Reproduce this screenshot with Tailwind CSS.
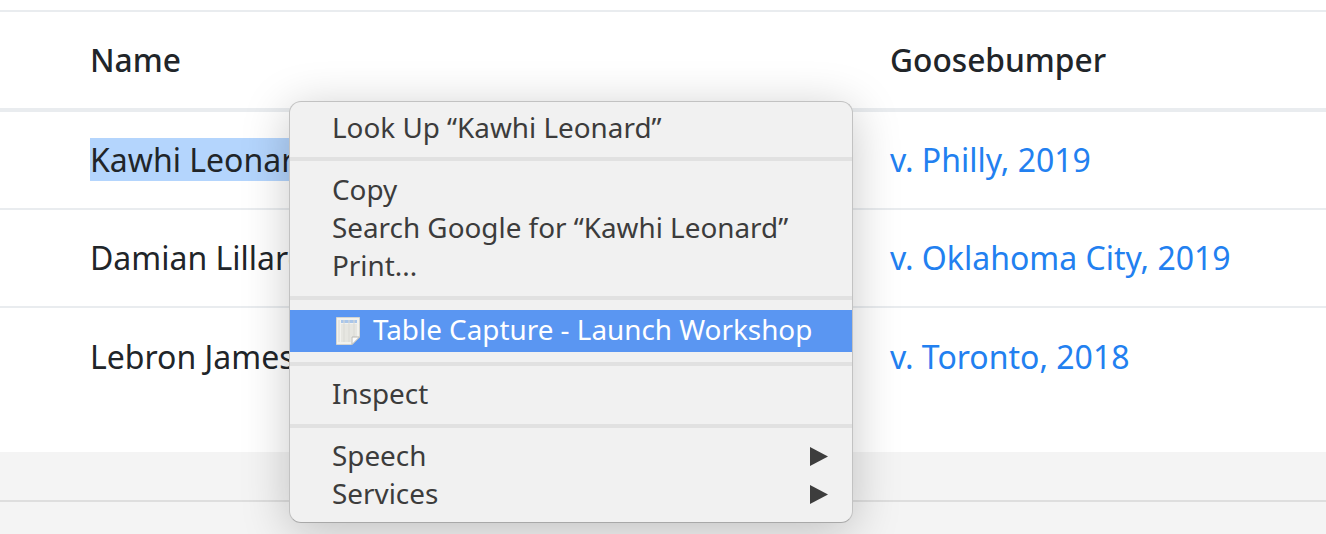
<!doctype html>
<html>
<head>
<meta charset="utf-8">
<script src="https://cdn.jsdelivr.net/npm/@tailwindcss/browser@4"></script>
</head>
<body class="bg-white">
<div class="relative w-[1326px] h-[534px] overflow-hidden font-['Noto_Sans','Open_Sans',sans-serif] text-[#212529]">
  <div class="pt-[10px]">
    <div class="h-[442px]">
      <div class="h-[102px] border-t-2 border-b-4 border-[#e9ecef] grid grid-cols-[800px_1fr] pl-[90px] items-center text-[31.7px] font-medium">
        <div>Name</div><div>Goosebumper</div>
      </div>
      <div class="h-[98px] border-b-2 border-[#e9ecef] grid grid-cols-[800px_1fr] pl-[90px] items-center text-[32px]">
        <div><span class="bg-[#b4d5fd]">Kawhi Leonard</span></div><div class="text-[#2280f0]">v. Philly, 2019</div>
      </div>
      <div class="h-[98px] border-b-2 border-[#e9ecef] grid grid-cols-[800px_1fr] pl-[90px] items-center text-[32px]">
        <div>Damian Lillard</div><div class="text-[#2280f0]">v. Oklahoma City, 2019</div>
      </div>
      <div class="h-[98px] grid grid-cols-[800px_1fr] pl-[90px] items-center text-[32px]">
        <div>Lebron James</div><div class="text-[#2280f0]">v. Toronto, 2018</div>
      </div>
    </div>
    <div class="h-[82px] bg-[#f4f4f4] pt-[48px]">
      <div class="h-[2px] bg-[#dedede]"></div>
    </div>
  </div>

  <div class="absolute left-[289px] top-[101px] w-[564px] h-[422px] rounded-[12px] border border-[#c2c2c2] border-b-[#a8a8a8] bg-[#f1f1f1] pt-[7px] text-[27.85px] leading-[36px] text-[#3c3c3c] shadow-[0_8px_48px_rgba(0,0,0,0.22)]">
    <div class="h-[38px] pl-[42px]">Look Up “Kawhi Leonard”</div>
    <div class="h-[4px] my-[10px] bg-[#e1e1e1]"></div>
    <div class="h-[38px] pl-[42px]">Copy</div>
    <div class="h-[38px] pl-[42px]">Search Google for “Kawhi Leonard”</div>
    <div class="h-[38px] pl-[42px]">Print...</div>
    <div class="h-[4px] mt-[11px] mb-[10px] bg-[#e1e1e1]"></div>
    <div class="h-[42px] bg-[#5a96f2] text-white flex items-start pl-[46px] gap-[13px]">
      <svg width="24" height="28" viewBox="0 0 24 28" class="shrink-0 mt-[7px]">
        <path d="M0.5 0.5H23.5V20L16 27.5H0.5Z" fill="#f2f2ee" stroke="#d5d5d0" stroke-width="1"/>
        <path d="M5 3H21V6H5Z" fill="#a9c6ea"/>
        <path d="M5 7H21V20H15V25H5Z" fill="#e6e6e1"/>
        <path d="M3 3V25M8 3V25M13 3V25M18 3V20" stroke="#dadad5" stroke-width="1" fill="none"/>
        <path d="M16 27.5V20H23.5Z" fill="#fbfbfb" stroke="#b9b9b4" stroke-width="1"/>
      </svg>
      <span class="leading-[38px]">Table Capture - Launch Workshop</span>
    </div>
    <div class="h-[4px] my-[10px] bg-[#e1e1e1]"></div>
    <div class="h-[38px] pl-[42px] leading-[34px]">Inspect</div>
    <div class="h-[4px] my-[10px] bg-[#e1e1e1]"></div>
    <div class="h-[38px] pl-[42px] pr-[24px] flex items-start justify-between leading-[34px]">Speech
      <svg width="18" height="19" viewBox="0 0 18 19" class="mt-[9px]"><path d="M0 0L18 9.5L0 19Z" fill="#3d3d3d"/></svg>
    </div>
    <div class="h-[38px] pl-[42px] pr-[24px] flex items-start justify-between leading-[34px]">Services
      <svg width="18" height="19" viewBox="0 0 18 19" class="mt-[9px]"><path d="M0 0L18 9.5L0 19Z" fill="#3d3d3d"/></svg>
    </div>
  </div>
</div>
</body>
</html>
